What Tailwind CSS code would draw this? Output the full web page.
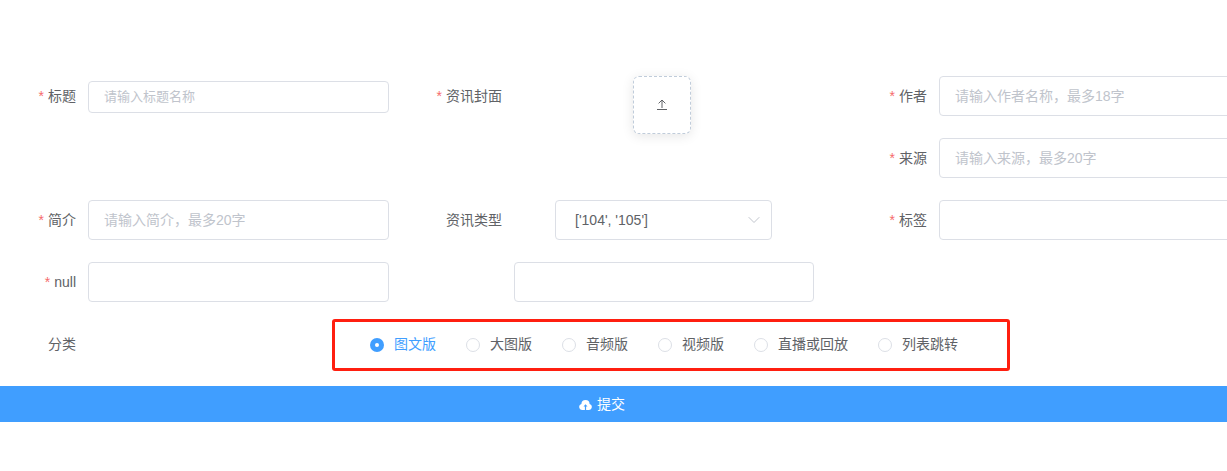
<!DOCTYPE html>
<html lang="zh-CN">
<head>
<meta charset="utf-8">
<title>资讯表单</title>
<script src="https://cdn.jsdelivr.net/npm/@tailwindcss/browser@4"></script>
</head>
<body class="bg-white overflow-hidden">
<div class="w-[1227px] h-[471px] overflow-hidden pt-[76px] text-sm text-[#606266] font-['Liberation_Sans','Noto_Sans_CJK_SC',sans-serif]">

  <div class="flex items-start h-[102px]">
    <div class="flex items-start w-[389px] shrink-0">
      <label class="w-[76px] h-10 leading-10 text-right shrink-0"><span class="text-[#f56c6c] mr-1">*</span>标题</label>
      <input class="mt-[5px] ml-3 w-[301px] h-8 pb-[2px] border border-[#dcdfe6] rounded pl-[15px] text-[13px] outline-none placeholder:text-[#c0c4cc]" placeholder="请输入标题名称">
    </div>
    <div class="flex items-start w-[462px] shrink-0">
      <label class="w-[113px] h-10 leading-10 text-right shrink-0"><span class="text-[#f56c6c] mr-1">*</span>资讯封面</label>
      <div class="ml-[131px] w-[58px] h-[58px] border border-dashed border-[#c0ccda] rounded-md shadow-[0_2px_12px_rgba(0,0,0,0.1)] flex items-center justify-center">
        <svg class="w-3 h-3" viewBox="0 0 12 12" fill="none" stroke="#606266" stroke-width="1"><path d="M6 9V1M2.600 4.400 6 1l3.400 3.400M1 10.500h10"/></svg>
      </div>
    </div>
    <div class="flex flex-col gap-[22px] shrink-0">
      <div class="flex">
        <label class="w-[76px] h-10 leading-10 text-right shrink-0"><span class="text-[#f56c6c] mr-1">*</span>作者</label>
        <input class="ml-3 w-[300px] h-10 border border-[#dcdfe6] rounded pl-[15px] outline-none placeholder:text-[#c0c4cc]" placeholder="请输入作者名称，最多18字">
      </div>
      <div class="flex">
        <label class="w-[76px] h-10 leading-10 text-right shrink-0"><span class="text-[#f56c6c] mr-1">*</span>来源</label>
        <input class="ml-3 w-[300px] h-10 border border-[#dcdfe6] rounded pl-[15px] outline-none placeholder:text-[#c0c4cc]" placeholder="请输入来源，最多20字">
      </div>
    </div>
  </div>

  <div class="flex items-start h-10 mt-[22px]">
    <div class="flex w-[389px] shrink-0">
      <label class="w-[76px] h-10 leading-10 text-right shrink-0"><span class="text-[#f56c6c] mr-1">*</span>简介</label>
      <input class="ml-3 w-[301px] h-10 border border-[#dcdfe6] rounded pl-[15px] outline-none placeholder:text-[#c0c4cc]" placeholder="请输入简介，最多20字">
    </div>
    <div class="flex w-[462px] shrink-0">
      <label class="w-[113px] h-10 leading-10 text-right shrink-0">资讯类型</label>
      <div class="ml-[53px] w-[217px] h-10 border border-[#dcdfe6] rounded pl-[19px] pr-[11px] flex items-center justify-between">
        <span>['104', '105']</span>
        <svg class="w-3 h-2" viewBox="0 0 12 8" fill="none" stroke="#c0c4cc" stroke-width="1"><path d="M.7 1.200 6 6.500l5.300-5.300"/></svg>
      </div>
    </div>
    <div class="flex shrink-0">
      <label class="w-[76px] h-10 leading-10 text-right shrink-0"><span class="text-[#f56c6c] mr-1">*</span>标签</label>
      <input class="ml-3 w-[300px] h-10 border border-[#dcdfe6] rounded outline-none">
    </div>
  </div>

  <div class="flex items-start h-10 mt-[22px]">
    <div class="flex w-[389px] shrink-0">
      <label class="w-[76px] h-10 leading-10 text-right shrink-0"><span class="text-[#f56c6c] mr-1">*</span>null</label>
      <input class="ml-3 w-[301px] h-10 border border-[#dcdfe6] rounded outline-none">
    </div>
    <input class="ml-[125px] w-[300px] h-10 border border-[#dcdfe6] rounded outline-none">
  </div>

  <div class="flex items-center h-[52px] mt-[17px]">
    <label class="w-[76px] mb-[2px] text-right shrink-0">分类</label>
    <div class="ml-[256px] w-[678px] h-[52px] border-[3px] border-[#ff1f10] rounded-[3px] pl-[35px] flex items-center gap-[30px]">
      <div class="flex items-center gap-[10px] text-[#409eff]">
        <span class="w-[14px] h-[14px] rounded-full bg-[#409eff] flex items-center justify-center"><span class="w-1 h-1 rounded-full bg-white"></span></span>
        <span class="mb-[2px]">图文版</span>
      </div>
      <div class="flex items-center gap-[10px]">
        <span class="w-[14px] h-[14px] rounded-full border border-[#dcdfe6]"></span>
        <span class="mb-[2px]">大图版</span>
      </div>
      <div class="flex items-center gap-[10px]">
        <span class="w-[14px] h-[14px] rounded-full border border-[#dcdfe6]"></span>
        <span class="mb-[2px]">音频版</span>
      </div>
      <div class="flex items-center gap-[10px]">
        <span class="w-[14px] h-[14px] rounded-full border border-[#dcdfe6]"></span>
        <span class="mb-[2px]">视频版</span>
      </div>
      <div class="flex items-center gap-[10px]">
        <span class="w-[14px] h-[14px] rounded-full border border-[#dcdfe6]"></span>
        <span class="mb-[2px]">直播或回放</span>
      </div>
      <div class="flex items-center gap-[10px]">
        <span class="w-[14px] h-[14px] rounded-full border border-[#dcdfe6]"></span>
        <span class="mb-[2px]">列表跳转</span>
      </div>
    </div>
  </div>

  <div class="mt-[15px] h-9 bg-[#409eff] text-white flex items-center justify-center gap-[5px] pr-[23px]">
    <svg class="w-[13px] h-[11px]" viewBox="0 0 13 11"><path fill="#fff" fill-rule="evenodd" d="M3 11a3 3 0 0 1-.6-5.900A4.200 4.200 0 0 1 6.500 1a4.200 4.200 0 0 1 4.100 4.100A3 3 0 0 1 10 11H7.100V7.600h1.400L6.500 5.300 4.500 7.600h1.400V11z"/></svg>
    <span>提交</span>
  </div>
</div>
</body>
</html>
